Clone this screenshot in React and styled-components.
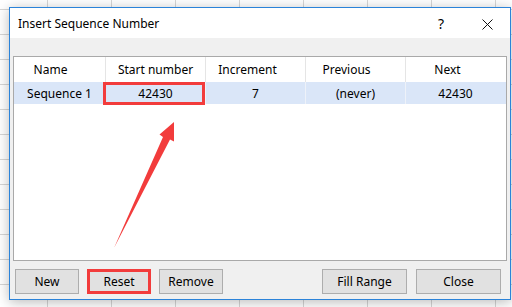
import React from 'react';
import styled, { createGlobalStyle } from 'styled-components';

const Global = createGlobalStyle`
  html, body { margin: 0; padding: 0; }
  body {
    width: 512px;
    height: 307px;
    overflow: hidden;
    font-family: "Noto Sans", "Open Sans", "DejaVu Sans", sans-serif;
    color: #000;
  }
`;

const Page = styled.div`
  position: relative;
  width: 512px;
  height: 307px;
  box-sizing: border-box;
  padding: 7px 0 0 9px;
  background-color: #fff;
  background-image:
    linear-gradient(to right, #d6d6d6 1px, transparent 1px),
    linear-gradient(to bottom, #d6d6d6 1px, transparent 1px);
  background-size: 64px 25px;
  background-position: 47px 9px;
`;

const Dialog = styled.div`
  width: 502px;
  height: 293px;
  box-sizing: border-box;
  border: 1px solid #2b83d9;
  display: flex;
  flex-direction: column;
  background: #f0f0f0;
  box-shadow: 0 2px 12px rgba(0, 0, 0, 0.28);
`;

const TitleBar = styled.div`
  flex: none;
  height: 30px;
  box-sizing: border-box;
  padding: 2px 0 0 8px;
  background: #fff;
  display: flex;
  align-items: center;
`;

const Title = styled.span`
  flex: 1;
  font-size: 12px;
  line-height: 1;
`;

const CaptionButton = styled.div`
  width: 46px;
  height: 28px;
  display: flex;
  align-items: center;
  justify-content: center;
  font-size: 14px;
  line-height: 1;
`;

const Body = styled.div`
  flex: 1;
  display: flex;
  flex-direction: column;
  padding: 18px 3px 5px;
`;

const ListBox = styled.div`
  flex: none;
  height: 205px;
  box-sizing: border-box;
  border: 1px solid #a9a9a9;
  background: #fff;
`;

const Row = styled.div`
  display: grid;
  grid-template-columns: 92px repeat(4, 100px);
  height: ${p => p.$h}px;
  background: ${p => (p.$selected ? '#dae6f8' : '#fff')};
`;

const Cell = styled.div`
  position: relative;
  box-sizing: border-box;
  display: flex;
  align-items: center;
  justify-content: center;
  padding-right: ${p => p.$shift || 0}px;
  padding-top: 1px;
  border-right: 1px solid ${p => (p.$last ? 'transparent' : p.$sep)};
  font-size: 12px;
  line-height: 1;
  white-space: nowrap;
`;

const CellMark = styled.div`
  position: absolute;
  top: 0;
  right: 0;
  bottom: -1px;
  left: -3px;
  border: 3px solid #f23c3c;
  pointer-events: none;
`;

const ButtonRow = styled.div`
  flex: none;
  margin-top: 8px;
  display: flex;
  justify-content: space-between;
  padding: 0 6px 0 2px;
`;

const ButtonGroup = styled.div`
  display: flex;
  gap: ${p => p.$gap}px;
`;

const Button = styled.div`
  box-sizing: border-box;
  width: ${p => p.$w}px;
  height: 25px;
  display: flex;
  align-items: center;
  justify-content: center;
  background: #e1e1e1;
  border: ${p => (p.$mark ? '3px solid #f23c3c' : '1px solid #adadad')};
  font-size: 12px;
  line-height: 1;
`;

const Overlay = styled.svg`
  position: absolute;
  left: 0;
  top: 0;
  pointer-events: none;
`;

const headers = [
  { label: 'Name', shift: 18 },
  { label: 'Start number', shift: 0 },
  { label: 'Increment', shift: 16 },
  { label: 'Previous', shift: 18 },
  { label: 'Next', shift: 16 },
];

const rowData = ['Sequence 1', '42430', '7', '(never)', '42430'];

export default function App() {
  return (
    <>
      <Global />
      <Page>
        <Dialog>
          <TitleBar>
            <Title>Insert Sequence Number</Title>
            <CaptionButton>?</CaptionButton>
            <CaptionButton>
              <svg width="11" height="11" viewBox="0 0 11 11">
                <path d="M0.5 0.5 L10.5 10.5 M10.5 0.5 L0.5 10.5" stroke="#111" strokeWidth="1" fill="none" />
              </svg>
            </CaptionButton>
          </TitleBar>
          <Body>
            <ListBox>
              <Row $h={25}>
                {headers.map((h, i) => (
                  <Cell key={h.label} $shift={h.shift} $sep="#e5e5e5" $last={i === headers.length - 1}>
                    {h.label}
                  </Cell>
                ))}
              </Row>
              <Row $h={22} $selected>
                {rowData.map((v, i) => (
                  <Cell key={i} $sep="#eef2f9" $last={i === rowData.length - 1}>
                    {v}
                    {i === 1 && <CellMark />}
                  </Cell>
                ))}
              </Row>
            </ListBox>
            <ButtonRow>
              <ButtonGroup $gap={8}>
                <Button $w={64}>New</Button>
                <Button $w={64} $mark>Reset</Button>
                <Button $w={64}>Remove</Button>
              </ButtonGroup>
              <ButtonGroup $gap={9}>
                <Button $w={85}>Fill Range</Button>
                <Button $w={85}>Close</Button>
              </ButtonGroup>
            </ButtonRow>
          </Body>
        </Dialog>
        <Overlay width="512" height="307" viewBox="0 0 512 307">
          <polygon
            points="114,248 163,137 159.5,134.5 174,122 174,141.5 170,139.5"
            fill="#f23c3c"
          />
        </Overlay>
      </Page>
    </>
  );
}
